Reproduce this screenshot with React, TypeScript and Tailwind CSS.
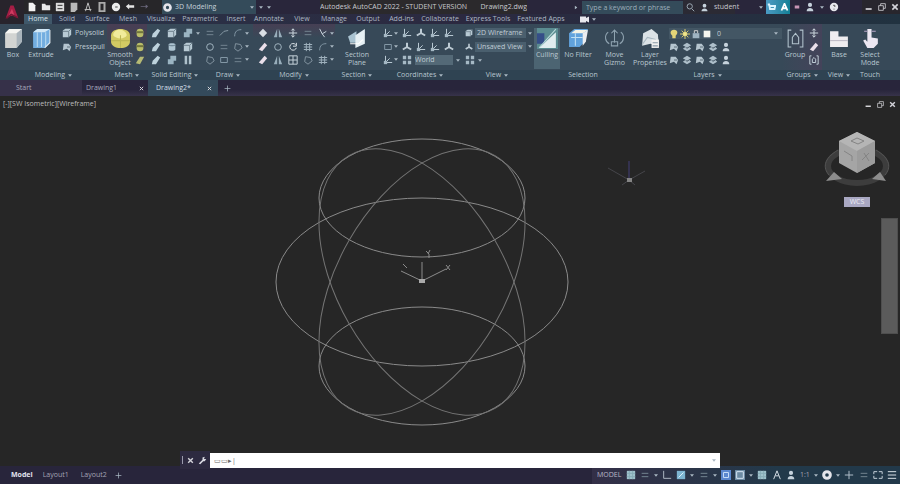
import React from "react";

type Shape = { d: string; fill?: string; stroke?: string; w?: number };

const ICONS: Record<string, Shape[]> = {
  page: [{ d: "M2 1h5l3 3v7H2z", fill: "#f2f2f2" }],
  folder: [{ d: "M1 2h4l1 2h5v6H1z", fill: "#e8e8e8" }],
  save: [{ d: "M1 1h10v10H1z", fill: "#dcdcdc" }, { d: "M3 4h6M3 8h6", stroke: "#333", w: 1 }],
  doc: [{ d: "M2 1h8v8l-3 3H2z", fill: "#b9b9b9" }],
  plot: [{ d: "M3 11l3-10 3 10M2 9h8", stroke: "#bbb", w: 1 }],
  sheet: [{ d: "M3 1h6v10H3z", stroke: "#aaa", w: 2 }],
  globe: [{ d: "M6 1a5 5 0 100 10A5 5 0 006 1z", fill: "#ececec" }, { d: "M5 5h3v2H5z", fill: "#888" }],
  undo: [{ d: "M1 5l4-3v2h6v3H5v2z", fill: "#e5e5e5" }],
  redo: [{ d: "M11 5L8 3v2H2v1h6v2z", fill: "#69667a" }],
  gear: [{ d: "M6 2a4 4 0 100 8 4 4 0 000-8z", stroke: "#e4e4ea", w: 3 }],
  cube: [{ d: "M1 3l3-2h7v7l-3 3H1z", fill: "#b8cad4" }, { d: "M1 4h7v7M8 4l3-3", stroke: "#70838f", w: 1 }],
  cyl: [{ d: "M2 3c0-2 8-2 8 0v6c0 2-8 2-8 0z", fill: "#aec5d2" }, { d: "M2 3c0 2 8 2 8 0", stroke: "#637b8b", w: 1 }],
  slice: [{ d: "M2 7l6-6 3 2-5 8H1z", fill: "#bed2dc" }],
  union: [{ d: "M4 1h7v6H8v4H1V5h3z", fill: "#9bb4c2" }],
  pair: [{ d: "M2 1h3v10H2zM7 1h3v10H7z", fill: "#aec0cb" }],
  olive: [{ d: "M2 4c0-4 8-4 8 0v4c0 4-8 4-8 0z", fill: "#b9bd69" }, { d: "M2 5h8", stroke: "#72763d", w: 2 }],
  oliveSlash: [{ d: "M1 10L6 2h5L6 11z", fill: "#b6ba74" }],
  line: [{ d: "M1 9l5-5 5-1", stroke: "#8798a5", w: 1 }],
  dash: [{ d: "M2 4h8M2 8h8", stroke: "#71838f", w: 1 }],
  circle: [{ d: "M6 2a4 4 0 100 8 4 4 0 000-8z", stroke: "#9db0bc", w: 1 }],
  arc: [{ d: "M2 10C2 4 5 2 10 2", stroke: "#8296a4", w: 1 }],
  rect: [{ d: "M2 3h8v6H2z", stroke: "#8397a5", w: 1 }],
  poly: [{ d: "M3 2l6 1 2 4-5 4-4-3z", stroke: "#81929e", w: 1 }],
  move: [{ d: "M6 1v10M1 6h10M4 3l2-2 2 2M4 9l2 2 2-2", stroke: "#ccd7de", w: 1 }],
  drop: [{ d: "M6 1l5 5-5 5-5-5z", fill: "#d8dee4" }],
  erase: [{ d: "M1 9L8 1l3 3-6 7z", fill: "#eadfea" }],
  mirror: [{ d: "M5 1L1 11h4zM7 1l4 10H7z", fill: "#98adba" }],
  rotate: [{ d: "M9 3a4 4 0 101 4M10 1v4H6", stroke: "#dce4e9", w: 1 }],
  array: [{ d: "M1 1h10v10H1zM6 1v10M1 6h10", stroke: "#c4d0d8", w: 1 }],
  hatch: [{ d: "M1 3h10M1 6h10M1 9h10M4 1v10M8 1v10", stroke: "#9eb0bc", w: 1 }],
  trim: [{ d: "M2 1l3 6 5-3M5 7l3 4", stroke: "#c5d1d9", w: 1 }],
  ucs: [{ d: "M3 1v8h8M3 9l5-5", stroke: "#b8c8d2", w: 1 }, { d: "M1 7h4v4H1z", fill: "#a5b8c4" }],
  axes: [{ d: "M6 1v5l5 3M6 6l-5 3", stroke: "#bdcbd4", w: 2 }],
  view: [{ d: "M1 1h4v4H1zM7 1h4v4H7zM1 7h4v4H1zM7 7h4v4H7z", fill: "#a6b9c5" }],
  layer: [{ d: "M2 2h6l3 4-2 5-3-3-5 2z", fill: "#b5c5cf" }, { d: "M6 6h4", stroke: "#5c6e7b", w: 1 }],
  layerOn: [{ d: "M1 4l5-3 5 3-5 3zM1 8l3-2 2 2 3-2 2 2-5 3z", fill: "#aebfca" }],
  bulb: [{ d: "M6 1c5 0 5 5 2 7v3H4V8C1 6 1 1 6 1z", fill: "#e3d477" }],
  sun: [{ d: "M6 0v12M0 6h12M2 2l8 8M10 2l-8 8", stroke: "#d7c96c", w: 1 }, { d: "M6 3l3 3-3 3-3-3z", fill: "#f1e68a" }],
  lock: [{ d: "M2 5h8v6H2z", fill: "#9fb4c2" }, { d: "M4 5V2h4v3", stroke: "#ccc", w: 1 }],
  swatch: [{ d: "M2 2h8v8H2z", fill: "#f5f5ee" }],
  group: [{ d: "M3 1H1v10h2M9 1h2v10H9M4 9V5l2-2 2 2v4z", stroke: "#bfcdd6", w: 1 }],
  person: [{ d: "M6 1a2 2 0 110 5 2 2 0 010-5zM2 11c0-5 8-5 8 0z", fill: "#c6d2dc" }],
  search: [{ d: "M5 1a3 3 0 100 7 3 3 0 000-7zM8 8l3 3", stroke: "#a4b2bd", w: 1 }],
  cart: [{ d: "M1 2h2l1 6h6l1-4H4", stroke: "#daf5ff", w: 2 }],
  app: [{ d: "M2 10L6 1l4 9M3 7h6", stroke: "#fff", w: 2 }],
  help: [{ d: "M6 1a5 5 0 100 10A5 5 0 006 1z", fill: "#e7e8ed" }, { d: "M5 4h2v2M6 8v1", stroke: "#555", w: 1 }],
  grid: [{ d: "M1 1h10v10H1z", fill: "#9fc2cc" }, { d: "M4 1v10M8 1v10M1 4h10M1 8h10", stroke: "#86abb6", w: 1 }],
  ortho: [{ d: "M2 1v9h9", stroke: "#aab3bf", w: 1 }],
  iso: [{ d: "M1 1h10v10H1z", fill: "#7db4d2" }, { d: "M3 9l6-6", stroke: "#d9f0fa", w: 1 }],
  osnap: [{ d: "M0 0h12v12H0z", fill: "#5b88cf" }, { d: "M3 3h6v6H3z", stroke: "#c5dcf8", w: 1 }],
  snap: [{ d: "M0 0h12v12H0z", fill: "#6c8ba3" }, { d: "M2 2h8v8H2z", stroke: "#d5e4f2", w: 1 }],
  annot: [{ d: "M2 11L6 1l4 10M4 7h4", stroke: "#d4dce4", w: 1 }],
  plus: [{ d: "M6 1v10M1 6h10", stroke: "#aebdc8", w: 1 }],
  full: [{ d: "M1 5V2h4M7 2h4v3M11 7v3H7M5 10H1V7", stroke: "#c2ced7", w: 1 }],
  menu: [{ d: "M1 2h10M1 6h10M1 10h10", stroke: "#d6dfe5", w: 1 }],
  wrench: [{ d: "M1 10l5-5V2l3-1-1 3h3L9 7H7l-4 4z", fill: "#dadae2" }],
  cross: [{ d: "M2 2l8 8M10 2l-8 8", stroke: "#d4d4da", w: 2 }],
  min: [{ d: "M1 9h9", stroke: "#dedee2", w: 2 }],
  restore: [{ d: "M1 4h7v7H1zM4 4V1h7v7H8", stroke: "#d4d4d8", w: 1 }],
  camera: [{ d: "M0 2h8v2l4-2v8L8 8v2H0z", fill: "#e7e7ed" }],
};

function Icon({ name, className = "size-2" }: { name: string; className?: string }) {
  return (
    <svg viewBox="0 0 12 12" className={`${className} shrink-0`} aria-hidden="true">
      {ICONS[name].map((s, i) => (
        <path key={i} d={s.d} fill={s.fill ?? "none"} stroke={s.stroke} strokeWidth={(s.w ?? 1) * 1.2} />
      ))}
    </svg>
  );
}

function Caret({ className = "" }: { className?: string }) {
  return (
    <svg viewBox="0 0 6 4" className={`h-[3px] w-1 shrink-0 ${className}`} aria-hidden="true">
      <path d="M0 0h6L3 4z" fill="#a9b7c2" />
    </svg>
  );
}

function CaretColumn() {
  return (
    <div className="flex h-[37px] flex-col justify-between py-1"><Caret /><Caret /><Caret /></div>
  );
}

function Tool({ name, label, size = "size-[10px]" }: { name: string; label: string; size?: string }) {
  return (
    <button type="button" aria-label={label} className="flex items-center justify-center">
      <Icon name={name} className={size} />
    </button>
  );
}

function ToolGrid({ names, label, cols, className = "" }: { names: string[]; label: string; cols: string; className?: string }) {
  return (
    <div className={`grid h-[37px] content-between ${cols} ${className}`}>
      {names.map((n, i) => (
        <Tool key={i} name={n} label={`${label} tool ${i + 1}`} />
      ))}
    </div>
  );
}

function Panel({ title, width, caret = true, tint = "", children }: {
  title: string; width: string; caret?: boolean; tint?: string; children: React.ReactNode;
}) {
  return (
    <section aria-label={title} className={`flex flex-col ${width}`}>
      <div className={`flex h-[46px] items-start pt-1 ${tint}`}>{children}</div>
      <h2 className="flex h-[10px] items-center justify-center gap-[3px] bg-[#2f4352] text-[7px] leading-[8px] text-[#b9c6cf]">
        {title}
        {caret && <Caret />}
      </h2>
    </section>
  );
}

function Big({ lines, width, active = false, children }: {
  lines: string[]; width: string; active?: boolean; children: React.ReactNode;
}) {
  return (
    <button type="button" className={`flex h-[41px] flex-col items-center ${width} ${active ? "bg-[#4c6472]" : ""}`}>
      <svg viewBox="0 0 20 20" className="size-[21px] shrink-0" aria-hidden="true">{children}</svg>
      <span className="mt-[2px] flex flex-col">
        {lines.map((l) => (
          <span key={l} className="text-[7px] leading-2 whitespace-nowrap text-[#bac8d1]">{l}</span>
        ))}
      </span>
    </button>
  );
}

const MENU: [string, string][] = [
  ["Home", "w-7"], ["Solid", "w-[30px]"], ["Surface", "w-[31px]"], ["Mesh", "w-[30px]"], ["Visualize", "w-[36px]"],
  ["Parametric", "w-[42px]"], ["Insert", "w-[30px]"], ["Annotate", "w-[36px]"], ["View", "w-[30px]"], ["Manage", "w-[34px]"],
  ["Output", "w-[34px]"], ["Add-ins", "w-[33px]"], ["Collaborate", "w-[44px]"], ["Express Tools", "w-[52px]"], ["Featured Apps", "w-[54px]"],
];

function Header() {
  return (
    <header className="flex h-6 bg-[#29263b]">
      <button type="button" aria-label="Application menu" className="flex w-6 shrink-0 items-center justify-center bg-[#28242c]">
        <svg viewBox="0 0 20 20" className="size-4" aria-hidden="true">
          <path d="M2 18L8 2h4l6 16-6-3H8z" fill="#a51e45" />
          <path d="M6 14l4-8 3 8z" fill="#d03c61" />
          <path d="M3 18l6-5 8 4" stroke="#6f1934" strokeWidth="2" fill="none" />
        </svg>
      </button>
      <div className="flex min-w-0 flex-1 flex-col">
        <div className="flex h-[14px] items-center text-[7px] leading-[10px] text-[#c9c9cf]">
          <div className="flex h-full w-[138px] shrink-0 items-center gap-1 bg-[#272629] pl-[3px]">
            {["page", "folder", "save", "doc", "plot", "sheet", "globe", "undo", "redo"].map((n) => (
              <Tool key={n} name={n} label={n} />
            ))}
          </div>
          <label className="flex h-full w-[94px] shrink-0 items-center gap-[3px] bg-[#344b5a] pl-px">
            <Icon name="gear" className="size-[9px]" />
            <select aria-label="Workspace" className="w-[72px] appearance-none bg-transparent text-[7px] leading-[10px] text-[#c6d2da]">
              <option>3D Modeling</option>
            </select>
            <Caret />
          </label>
          <div className="flex w-16 shrink-0 items-center gap-1 pl-[3px]"><Caret /><Caret /></div>
          <h1 className="flex h-full w-[207px] shrink-0 items-center justify-between overflow-hidden bg-[#2b292c] whitespace-nowrap">
            <span>Autodesk AutoCAD 2022 - STUDENT VERSION</span>
            <span>Drawing2.dwg</span>
          </h1>
          <div className="flex min-w-0 flex-1 items-center justify-end pr-1"><Caret className="-rotate-90" /></div>
          <input aria-label="Search" placeholder="Type a keyword or phrase" className="h-[13px] w-[101px] shrink-0 bg-[#344b5a] px-1 text-[7px] placeholder:text-[#9eafbb]" />
          <div className="flex h-full w-[52px] shrink-0 items-center gap-[5px] bg-[#2b2a34] pl-[3px]">
            <Icon name="search" className="size-[9px]" />
            <Icon name="person" className="size-[9px]" />
            <span>student</span>
          </div>
          <div className="flex h-full w-[31px] shrink-0 items-center justify-end pr-[3px]"><Caret /></div>
          <div className="flex h-full w-6 shrink-0 items-center justify-center gap-1 bg-linear-to-r from-[#4a9bc4] to-[#0e8096]">
            <Icon name="cart" className="size-[9px]" />
            <Icon name="app" className="size-[9px]" />
          </div>
          <div className="flex h-full w-[72px] shrink-0 items-center gap-[5px] pl-1">
            <svg viewBox="0 0 8 8" className="size-[6px]" aria-hidden="true"><path d="M1 2h6v4H1z" fill="#c895b5" /></svg>
            <Icon name="person" className="size-[10px]" />
            <Caret />
            <Tool name="help" label="Help" />
          </div>
          <div className="flex h-full w-[38px] shrink-0 items-center justify-between bg-[#28262d] pr-px pl-[3px]">
            <Tool name="min" label="Minimize" size="size-2" />
            <Tool name="restore" label="Restore" size="size-2" />
            <Tool name="cross" label="Close" size="size-2" />
          </div>
        </div>
        <nav aria-label="Ribbon tabs" className="flex h-[10px] items-center bg-linear-to-r from-[#293448] via-[#2b2940] to-[#213240] text-[7px] leading-[10px] text-[#aeb8c4]">
          {MENU.map(([m, w], i) => (
            <button key={m} type="button" className={`shrink-0 whitespace-nowrap ${w} ${i === 0 ? "bg-[#40586a] text-[#dbe5ec]" : ""}`}>{m}</button>
          ))}
          <button type="button" aria-label="Ribbon display" className="ml-3 flex items-center gap-[3px]">
            <Icon name="camera" className="size-[9px]" />
            <Caret />
          </button>
        </nav>
      </div>
    </header>
  );
}

const SMALL_TEXT = "text-[7px] leading-[10px] text-[#c0cdd6]";

function Ribbon() {
  return (
    <div className="flex h-14 bg-[#374958]">
      <Panel title="Modeling" width="w-[107px] shrink-0">
        <Big lines={["Box"]} width="w-[26px]">
          <path d="M2 5l4-4h12v12l-5 6H2z" fill="#d2d4d2" /><path d="M2 5l4-4h12l-5 4z" fill="#f5f5f2" /><path d="M13 5l5-4v12l-5 6z" fill="#a9b4bb" />
        </Big>
        <Big lines={["Extrude"]} width="w-[30px]">
          <path d="M2 4l4-3h12v13l-5 5H2z" fill="#73aee0" /><path d="M2 4l4-3h12l-5 3z" fill="#d1e7f6" /><path d="M6 4v14M10 4v14M14 4v14" stroke="#b9daf0" /><path d="M13 19l5-5V2" stroke="#e4edf3" fill="none" />
        </Big>
        <div className={`flex flex-1 flex-col gap-1 pl-[6px] ${SMALL_TEXT}`}>
          <button type="button" className="flex items-center gap-[3px]"><Icon name="cube" className="size-[10px]" />Polysolid</button>
          <button type="button" className="flex items-center gap-[3px]"><Icon name="layer" className="size-[10px]" />Presspull</button>
        </div>
      </Panel>
      <Panel title="Mesh" width="w-[40px] shrink-0" tint="bg-linear-to-b from-[#493e54] via-[#3c4654] to-[#374958]">
        <Big lines={["Smooth", "Object"]} width="w-[26px]">
          <path d="M1 7c0-8 18-8 18 0v6c0 8-18 8-18 0z" fill="#d2ca63" /><path d="M3 7c0-7 12-7 13 0-2 4-10 4-13 0z" fill="#f1eb9b" /><path d="M1 12h18M10 7v12" stroke="#bdb755" />
        </Big>
        <ToolGrid names={["olive", "olive", "oliveSlash"]} label="Mesh" cols="grid-cols-1" className="w-[14px]" />
      </Panel>
      <Panel title="Solid Editing" width="w-[56px] shrink-0">
        <ToolGrid names={["slice", "cube", "union", "slice", "cyl", "cube", "slice", "union", "pair"]} label="Solid editing" cols="grid-cols-3" className="ml-px w-[48px]" />
        <Caret className="mt-1" />
      </Panel>
      <Panel title="Draw" width="w-[50px] shrink-0">
        <ToolGrid names={["dash", "line", "arc", "circle", "dash", "poly", "poly", "rect", "dash"]} label="Draw" cols="grid-cols-3" className="w-[42px]" />
        <CaretColumn />
      </Panel>
      <Panel title="Modify" width="w-[82px] shrink-0" tint="bg-linear-to-b from-[#463f54] to-[#374958] to-30%">
        <ToolGrid names={["drop", "mirror", "move", "dash", "trim", "erase", "circle", "rotate", "hatch", "arc", "erase", "mirror", "array", "poly", "hatch"]} label="Modify" cols="grid-cols-5" className="ml-[2px] w-[75px]" />
        <CaretColumn />
      </Panel>
      <Panel title="Section" width="w-[44px] shrink-0">
        <Big lines={["Section", "Plane"]} width="w-[44px]">
          <path d="M1 8l8-5v11H3z" fill="#a9c3d1" /><path d="M8 7l9-6v14l-9 4z" fill="#e6f0f4" /><path d="M3 15h8l4-4" stroke="#fff" fill="none" />
        </Big>
      </Panel>
      <Panel title="Coordinates" width="w-[82px] shrink-0">
        <ToolGrid names={["ucs", "rect", "ucs"]} label="Section" cols="grid-cols-1" className="ml-[3px] w-[12px]" />
        <CaretColumn />
        <div className="ml-1 flex h-[37px] flex-1 flex-col justify-between">
          {[["ucs", "axes", "ucs", "ucs"], ["axes", "ucs", "ucs", "axes"]].map((r, i) => (
            <div key={i} className="flex gap-1">{r.map((n, j) => <Tool key={j} name={n} label={`UCS ${i * 4 + j + 1}`} />)}</div>
          ))}
          <label className="flex items-center gap-[3px]">
            <Icon name="view" className="size-[10px]" />
            <select aria-label="Coordinate system" className={`w-[38px] appearance-none bg-[#546977] ${SMALL_TEXT}`}><option>World</option></select>
            <Caret />
          </label>
        </div>
      </Panel>
      <Panel title="View" width="w-[72px] shrink-0">
        <div className="flex h-[37px] flex-1 flex-col justify-between pl-1">
          {["2D Wireframe", "Unsaved View"].map((t, i) => (
            <label key={t} className="flex items-center gap-[2px]">
              <Icon name={i ? "axes" : "cube"} className="size-2" />
              <select aria-label={t} className={`w-[51px] appearance-none bg-[#4a5f6e] pl-[2px] ${SMALL_TEXT}`}><option>{t}</option></select>
              <Caret />
            </label>
          ))}
          <div className="flex items-center gap-[3px]"><Tool name="view" label="Viewports" /><Caret /></div>
        </div>
      </Panel>
      <Panel title="Selection" width="w-[100px] shrink-0" caret={false}>
        <Big lines={["Culling"]} width="w-[26px] ml-px" active>
          <path d="M0 0h20v20H0z" fill="#5b8c91" /><path d="M0 5h7v10H0z" fill="#354e88" /><path d="M2 19L18 4v15z" fill="#e1edef" /><path d="M2 19L18 1" stroke="#b8d9d9" />
        </Big>
        <Big lines={["No Filter"]} width="w-[36px]">
          <path d="M1 5l5-4h13l-3 12-5 5H1z" fill="#61a2dc" /><path d="M3 5l4-3h12l-5 3z" fill="#f4f3e6" /><path d="M14 5l5-3-2 11-3 4z" fill="#ebedf0" /><path d="M3 9h11M7 5v12" stroke="#c2e1f4" />
        </Big>
        <Big lines={["Move", "Gizmo"]} width="w-[37px]">
          <path d="M10 2v12M7 5l3-3 3 3M4 4c-4 3-3 9 1 11M16 4c4 3 3 9-1 11M7 13h6v4H7z" stroke="#8fa3b0" fill="none" />
        </Big>
      </Panel>
      <Panel title="Layers" width="min-w-0 flex-1">
        <Big lines={["Layer", "Properties"]} width="w-[34px] shrink-0">
          <path d="M3 5l8-4 6 5 1 11-8-2-8 2z" fill="#dbe2e6" /><path d="M2 16l5-7 8 2" stroke="#a9b8c1" fill="none" /><path d="M11 11h7v8h-7z" fill="#f1f1ef" /><path d="M12 14h5M12 17h5" stroke="#8798a5" />
        </Big>
        <div className="flex h-[37px] min-w-0 flex-1 flex-col justify-between pl-[2px]">
          <label className="flex h-[11px] items-center gap-px bg-[#435664]">
            {["bulb", "sun", "lock", "swatch"].map((n) => <Icon key={n} name={n} className="size-[10px]" />)}
            <select aria-label="Current layer" className={`min-w-0 flex-1 appearance-none bg-transparent pl-1 ${SMALL_TEXT}`}><option>0</option></select>
            <Caret className="mr-1" />
          </label>
          {[0, 1].map((r) => (
            <div key={r} className="flex gap-[3px]">
              {["layer", "layerOn", "layer", "layerOn", "person"].map((n, i) => <Tool key={i} name={n} label={`Layer tool ${r * 5 + i + 1}`} />)}
            </div>
          ))}
        </div>
      </Panel>
      <Panel title="Groups" width="w-[40px] shrink-0" tint="bg-linear-to-r from-[#374958] to-[#44435a]">
        <Big lines={["Group"]} width="w-[26px]">
          <path d="M6 2H3v16h3M14 2h3v16h-3M7 15V9l3-4 3 4v6z" stroke="#b3c4ce" strokeWidth="1" fill="none" />
        </Big>
        <ToolGrid names={["move", "erase", "group"]} label="Group" cols="grid-cols-1" className="w-3" />
      </Panel>
      <Panel title="View" width="w-[34px] shrink-0">
        <Big lines={["Base"]} width="w-[34px]">
          <path d="M1 3h8v5h9v10H1z" fill="#efedf0" /><path d="M1 12h17" stroke="#bdb9c5" />
        </Big>
      </Panel>
      <Panel title="Touch" width="w-[28px] shrink-0" caret={false}>
        <Big lines={["Select", "Mode"]} width="w-[28px]">
          <path d="M7 1h4v8l6 1v5l-4 4H7l-4-7 2-1 2 2z" fill="#ece7f2" /><path d="M4 3h3M11 3h4" stroke="#b9a8ca" />
        </Big>
      </Panel>
      <div className="flex w-4 shrink-0 flex-col justify-end"><div className="h-[10px] bg-[#2f4352]" /></div>
    </div>
  );
}

function FileTabs() {
  return (
    <nav aria-label="Drawings" className="flex h-4 items-center bg-linear-to-b from-[#28253b] from-60% to-[#37334a] text-[7px] leading-4 text-[#a7a9bb]">
      <button type="button" className="h-full w-[82px] bg-[#363149] pl-4 text-left">Start</button>
      <button type="button" className="flex h-full w-[66px] items-center justify-between pr-1 pl-1">Drawing1<Icon name="cross" className="size-[5px]" /></button>
      <button type="button" className="flex h-full w-[70px] items-center justify-between bg-[#344a5b] pr-[6px] pl-2 text-[#d2dee6]">Drawing2*<Icon name="cross" className="size-[5px]" /></button>
      <button type="button" aria-label="New drawing" className="ml-[6px]"><Icon name="plus" className="size-[7px]" /></button>
    </nav>
  );
}

function Canvas() {
  return (
    <main className="relative flex-1 bg-[#262626]">
      <svg viewBox="0 96 900 370" className="absolute inset-0 h-full w-full" role="img" aria-label="Wireframe model">
        <g fill="none" stroke="#8a8a8a" strokeWidth="1">
          <ellipse cx="422" cy="198" rx="103" ry="59" />
          <ellipse cx="422" cy="366" rx="103" ry="59" />
          <ellipse cx="422" cy="282" rx="146" ry="84" />
          <ellipse cx="422" cy="282" rx="146" ry="84" transform="rotate(60 422 282)" stroke="#747474" />
          <ellipse cx="422" cy="282" rx="146" ry="84" transform="rotate(-60 422 282)" stroke="#747474" />
        </g>
        <path d="M422 281V262M422 281l-21-10M422 281l24-12M403 264l4 4M446 265l4 5M450 265l-4 5M426 251l3 3v4M430 250l-2 4" stroke="#8c8c8c" fill="none" />
        <path d="M419 279h6v4h-6z" fill="#aaa" />
        <path d="M629 181v-20" stroke="#34324f" strokeWidth="2" />
        <path d="M608 168l21 12M629 180l16-9M622 185l7-5 6 5" stroke="#45454a" fill="none" />
        <path d="M627 178h5v4h-5z" fill="#858585" />
      </svg>
      <div className="relative flex items-center justify-between pt-[3px] pr-1 pl-[3px] text-[7px] leading-[10px] text-[#bdbdbd]">
        <span>[-][SW Isometric][Wireframe]</span>
        <span className="flex gap-[5px]">
          <Tool name="min" label="Minimize view" size="size-[7px]" />
          <Tool name="restore" label="Restore view" size="size-[7px]" />
          <Tool name="cross" label="Close view" size="size-[7px]" />
        </span>
      </div>
      <div className="absolute top-[34px] right-[10px] flex w-[66px] flex-col items-center">
        <svg viewBox="0 0 66 62" className="h-[62px] w-[66px]" aria-hidden="true">
          <ellipse cx="33" cy="36" rx="29" ry="17" fill="none" stroke="#3d3d3d" strokeWidth="6" />
          <path d="M14 20c-15 9-15 18-9 25M52 20c15 9 15 18 9 25" fill="none" stroke="#555" />
          <path d="M2 51l8-9 8 7zM48 49l8-7 6 9z" fill="#8d8d8d" />
          <path d="M33 2l18 9v22L33 43 15 33V11z" fill="#a5a5a5" />
          <path d="M33 2l18 9-18 10-18-10z" fill="#b5b5b5" />
          <path d="M33 21l18-10v22L33 43z" fill="#9c9c9c" />
          <path d="M27 11l6-3 7 3-6 3zM20 21l8 5v5M38 30l7-7M40 23l5 8" stroke="#848484" fill="none" />
        </svg>
        <button type="button" className="mt-[5px] h-[10px] w-[26px] bg-[#a9a8c2] text-[7px] leading-[10px] text-[#ececf3]">WCS</button>
      </div>
      <div className="absolute top-[122px] right-[2px] h-[116px] w-[17px] border border-[#4e4e4e] bg-[#5b5b5b]" />
      <form className="absolute bottom-[-2px] left-1/5 flex h-4 w-3/5 items-center" onSubmit={(e) => e.preventDefault()}>
        <div className="flex h-[18px] w-[30px] shrink-0 items-center gap-1 bg-[#2d2a40] pl-[2px]">
          <span className="h-2 w-px bg-[#9a9aac]" />
          <Icon name="cross" className="size-[7px]" />
          <Icon name="wrench" className="size-[9px]" />
        </div>
        <input aria-label="Command line" defaultValue="▭▭▸|" className="h-[15px] min-w-0 flex-1 bg-white px-1 text-[7px] text-[#666]" />
        <button type="button" aria-label="Command history" className="flex h-[15px] w-2 items-center bg-white"><Caret /></button>
      </form>
    </main>
  );
}

function StatusBar() {
  const icons = ["grid", "dash", "caret", "ortho", "iso", "caret", "dash", "caret", "osnap", "snap", "caret", "grid", "annot", "person"];
  return (
    <footer className="flex h-[18px] items-center bg-[#28253b] text-[7px] leading-[10px] text-[#a4a3b4]">
      <button type="button" className="ml-[11px] font-bold text-[#e3e3ee]">Model</button>
      <button type="button" className="ml-[10px]">Layout1</button>
      <button type="button" className="ml-3">Layout2</button>
      <button type="button" aria-label="New layout" className="ml-2"><Icon name="plus" className="size-[7px]" /></button>
      <div className="ml-auto flex h-full w-[308px] items-center justify-between bg-linear-to-r from-[#332f47] to-[#22394a] to-60% pr-[3px] pl-[5px]">
        <span className="text-[#b9b9c8]">MODEL</span>
        {icons.map((n, i) => n === "caret" ? <Caret key={i} /> : <Tool key={i} name={n} label={`Drafting option ${i + 1}`} />)}
        <span>1:1</span>
        <Caret />
        <Tool name="gear" label="Settings" />
        <Caret />
        <Tool name="plus" label="Annotation monitor" />
        <Tool name="dash" label="Isolate" />
        <Tool name="full" label="Full screen" />
        <Tool name="menu" label="Customize" />
      </div>
    </footer>
  );
}

export default function App() {
  return (
    <div className="flex min-h-screen flex-col overflow-hidden bg-[#262626] font-['Open_Sans','Noto_Sans',sans-serif]">
      <Header />
      <Ribbon />
      <FileTabs />
      <Canvas />
      <StatusBar />
    </div>
  );
}
